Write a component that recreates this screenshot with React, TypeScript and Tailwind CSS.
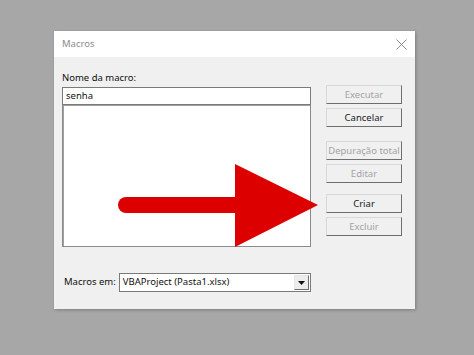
// Macros dialog (Excel VBA) with a red pointer arrow toward "Criar".
const BUTTONS: { label: string; enabled: boolean; gapBefore?: number }[] = [
  { label: 'Executar', enabled: false },
  { label: 'Cancelar', enabled: true, gapBefore: 4 },
  { label: 'Depuração total', enabled: false, gapBefore: 14 },
  { label: 'Editar', enabled: false, gapBefore: 4 },
  { label: 'Criar', enabled: true, gapBefore: 11 },
  { label: 'Excluir', enabled: false, gapBefore: 4 },
];

function DlgButton({ label, enabled }: { label: string; enabled: boolean }) {
  return (
    <div
      className={
        'flex h-[19px] w-[76px] items-center justify-center whitespace-nowrap border border-t-[#d9d9d9] border-l-[#d9d9d9] border-r-[#6e6e6e] border-b-[#6e6e6e] bg-[#f0f0f0] text-[9.5px] leading-none ' +
        (enabled ? 'text-[#1a1a1a]' : 'text-[#a3a3a3]')
      }
    >
      {label}
    </div>
  );
}

export default function App() {
  return (
    <div className="relative h-[355px] w-[474px] overflow-hidden bg-[#a7a7a7] pl-[54px] pt-[31px] font-['Segoe_UI','Noto_Sans',sans-serif]">
      <div className="flex h-[278px] w-[361px] flex-col shadow-[1px_1px_3px_rgba(0,0,0,0.25)]">
        {/* title bar */}
        <div className="flex h-[26px] items-center justify-between bg-white pl-[8px] pr-[7px]">
          <span className="text-[9.5px] text-[#8c8c8c]">Macros</span>
          <svg width="11" height="11" viewBox="0 0 11 11" className="mr-[1px]">
            <path d="M0.5 0.5 L10.5 10.5 M10.5 0.5 L0.5 10.5" stroke="#8a8a8a" strokeWidth="1" />
          </svg>
        </div>

        {/* body */}
        <div className="flex flex-1 flex-col bg-[#f0f0f0] px-[8px]">
          <div className="flex gap-[15px]">
            <div className="flex w-[249px] flex-col pt-[14px]">
              <span className="h-[16px] whitespace-nowrap text-[9.5px] leading-[14px] text-[#111]">Nome da macro:</span>
              <div className="flex h-[18px] items-center border border-[#7a7a7a] bg-white px-[3px] text-[9.5px] text-[#111]">
                senha
              </div>
              <div className="h-[142px] border border-t-0 border-[#8a8a8a] bg-white shadow-[inset_1px_1px_0_#a0a0a0]" />
            </div>
            <div className="flex flex-col pt-[28px]">
              {BUTTONS.map((b) => (
                <div key={b.label} style={{ marginTop: b.gapBefore ?? 0 }}>
                  <DlgButton label={b.label} enabled={b.enabled} />
                </div>
              ))}
            </div>
          </div>

          <div className="mt-[26px] flex w-[249px] items-center">
            <span className="ml-[2px] mr-[3px] shrink-0 whitespace-nowrap text-[9.5px] text-[#111]">Macros em:</span>
            <div className="flex h-[19px] flex-1 items-center justify-between border border-[#7a7a7a] bg-white pl-[3px] pr-[1px]">
              <span className="whitespace-nowrap text-[9.5px] text-[#111]">VBAProject (Pasta1.xlsx)</span>
              <div className="flex h-[15px] w-[15px] items-center justify-center border border-t-[#e6e6e6] border-l-[#e6e6e6] border-r-[#6e6e6e] border-b-[#6e6e6e] bg-[#ececec]">
                <svg width="7" height="4" viewBox="0 0 7 4">
                  <path d="M0 0 H7 L3.5 4 Z" fill="#111" />
                </svg>
              </div>
            </div>
          </div>
        </div>
      </div>

      {/* red pointer arrow */}
      <svg
        className="absolute left-0 top-0"
        width="474"
        height="355"
        viewBox="0 0 474 355"
      >
        <path d="M126 197 H240 V213 H126 A8 8 0 0 1 126 197 Z" fill="#dd0000" />
        <polygon points="235,164 318,205 235,247" fill="#dd0000" />
      </svg>
    </div>
  );
}
